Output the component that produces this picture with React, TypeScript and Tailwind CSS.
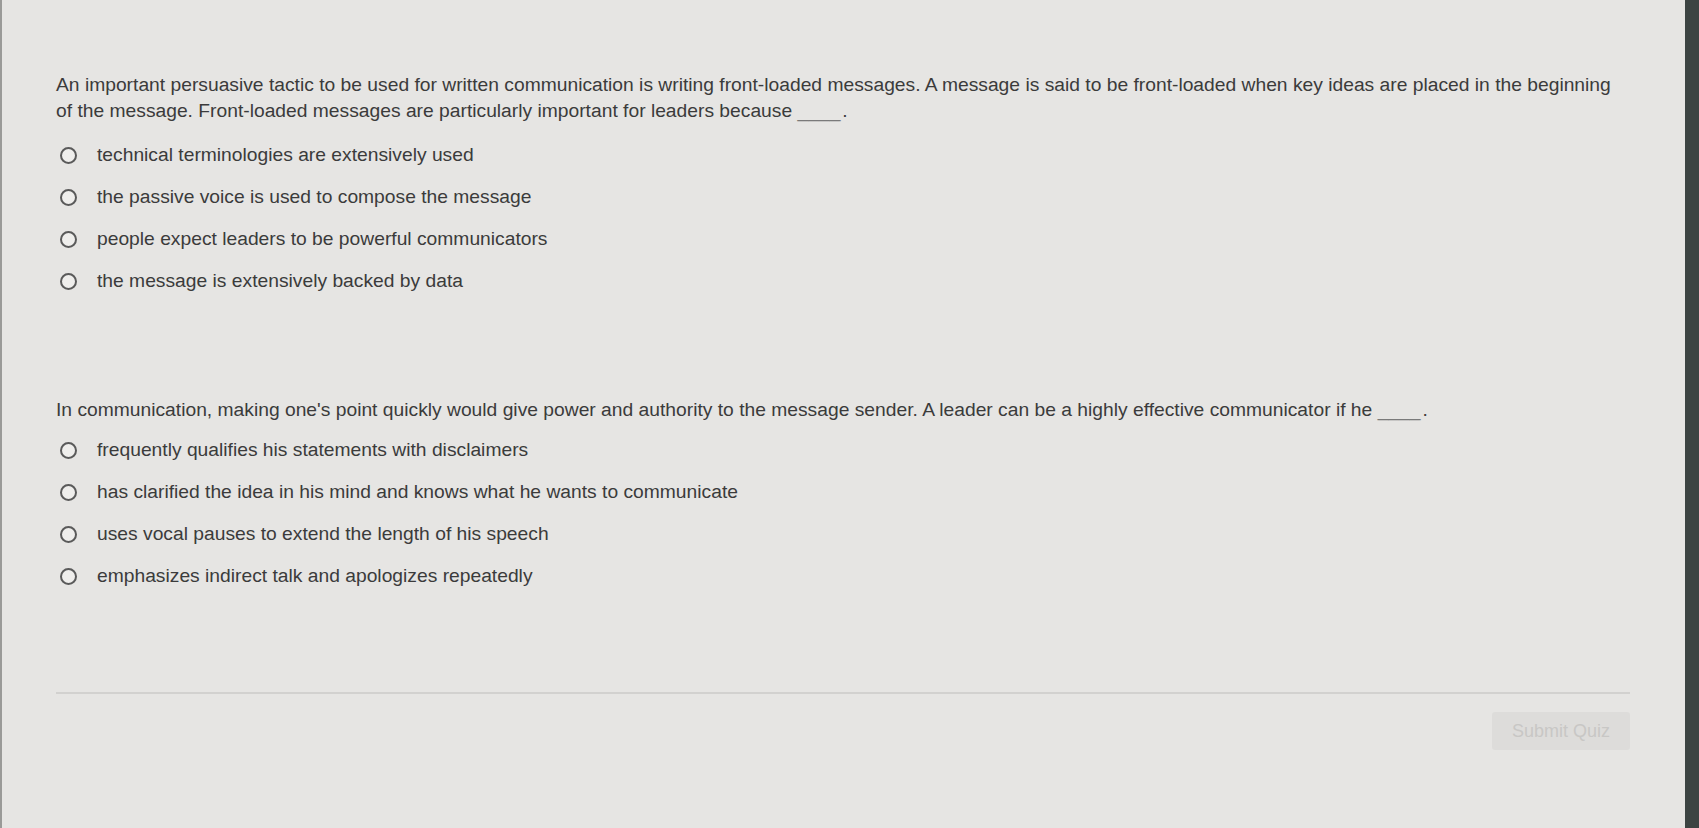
import React from "react";

const q1 = [
  "technical terminologies are extensively used",
  "the passive voice is used to compose the message",
  "people expect leaders to be powerful communicators",
  "the message is extensively backed by data",
];
const q2 = [
  "frequently qualifies his statements with disclaimers",
  "has clarified the idea in his mind and knows what he wants to communicate",
  "uses vocal pauses to extend the length of his speech",
  "emphasizes indirect talk and apologizes repeatedly",
];

function Option({ text }: { text: string }) {
  return (
    <label className="flex items-center h-[42px]">
      <span className="ml-[4px] w-[17px] h-[17px] rounded-full border-[2px] border-[#5a5a5a] bg-[#efeeec]" />
      <span className="ml-[20px]">{text}</span>
    </label>
  );
}

export default function App() {
  return (
    <div className="w-[1699px] h-[828px] flex bg-[#e6e5e3] text-[#3b3b3b] text-[19.25px] leading-[26px] font-['Liberation_Sans',Arial,sans-serif] overflow-hidden">
      <div className="w-[2px] bg-[#9a9a98]" />
      <div className="flex-1 flex flex-col pl-[54px] pr-[55px] pt-[72px]">
        <p className="w-[1565px]">
          An important persuasive tactic to be used for written communication is writing front-loaded messages. A message is said to be front-loaded when key ideas are placed in the beginning of the message. Front-loaded messages are particularly important for leaders because <span className="text-[#7a7a7a] mr-[2px]">____</span>.
        </p>
        <div className="mt-[10px] flex flex-col">
          {q1.map((t) => (
            <Option key={t} text={t} />
          ))}
        </div>
        <p className="mt-[95px]">
          In communication, making one's point quickly would give power and authority to the message sender. A leader can be a highly effective communicator if he <span className="text-[#7a7a7a] mr-[2px]">____</span>.
        </p>
        <div className="mt-[6px] flex flex-col">
          {q2.map((t) => (
            <Option key={t} text={t} />
          ))}
        </div>
        <div className="mt-[95px] h-[2px] bg-[#d2d1cf]" />
        <div className="mt-[18px] flex justify-end">
          <button className="w-[138px] h-[38px] rounded-[3px] bg-[#dddcda] text-[#c8c7c5] text-[18px]">
            Submit Quiz
          </button>
        </div>
      </div>
      <div className="w-[14px] bg-[#3c4442]" />
    </div>
  );
}
